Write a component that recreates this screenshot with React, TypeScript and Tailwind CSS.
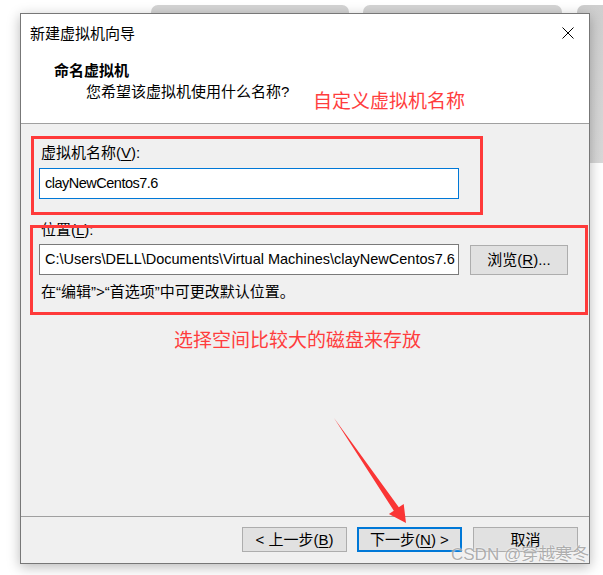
import React from "react";

const ui = { fontFamily: '"Liberation Sans", "Noto Sans CJK SC", sans-serif' };
const cjk = { fontFamily: '"Noto Sans CJK SC", "Liberation Sans", sans-serif' };

function Key({ k }: { k: string }) {
  return <span className="underline underline-offset-2">{k}</span>;
}

function Btn({
  children,
  primary,
  className = "",
}: {
  children: React.ReactNode;
  primary?: boolean;
  className?: string;
}) {
  return (
    <div
      className={
        "flex h-[25px] w-[105px] items-center justify-center bg-[#e1e1e1] text-[15px] leading-[20px] text-black " +
        (primary ? "border-2 border-[#0078d7] " : "border border-[#adadad] ") +
        className
      }
    >
      {children}
    </div>
  );
}

function CloseIcon() {
  return (
    <svg width="12" height="12" viewBox="0 0 12 12" className="block">
      <path d="M0.5 0.5 L11.5 11.5 M11.5 0.5 L0.5 11.5" stroke="#000" strokeWidth="1" />
    </svg>
  );
}

export default function App() {
  return (
    <div className="relative h-[575px] w-[603px] overflow-hidden bg-white" style={ui}>
      {/* browser tabs peeking out behind the dialog */}
      <div className="absolute left-[151px] top-[5px] h-[40px] w-[198px] rounded-t-[7px] bg-[#d4d4d4]" />
      <div className="absolute left-[363px] top-[5px] h-[40px] w-[199px] rounded-t-[7px] bg-[#d4d4d4]" />
      <div className="absolute left-[577px] top-[5px] h-[158px] w-[40px] rounded-tl-[7px] bg-[linear-gradient(#cfcfcf,#d8d8d8)]" />

      {/* wizard window */}
      <div className="relative ml-[20px] mt-[13px] flex h-[551px] w-[570px] flex-col border border-[#777] bg-[#f0f0f0] shadow-[0_3px_12px_rgba(0,0,0,0.28)]">
        {/* title + page header */}
        <div className="flex h-[109px] flex-col bg-white">
          <div className="flex h-[38px] items-center justify-between pl-[9px] pr-[15px]">
            <span className="text-[15px] leading-[20px] text-black" style={cjk}>新建虚拟机向导</span>
            <CloseIcon />
          </div>
          <div className="mt-[8px] pl-[33px] text-[15px] font-bold leading-[20px] text-black" style={cjk}>命名虚拟机</div>
          <div className="mt-[2px] pl-[65px] text-[15px] leading-[20px] text-black">您希望该虚拟机使用什么名称?</div>
        </div>
        <div className="h-px bg-[#a0a0a0]" />

        {/* form */}
        <div className="flex flex-1 flex-col pl-[18px] pt-[19px]">
          <div className="ml-[2px] text-[15px] leading-[20px] text-black">
            虚拟机名称(<Key k="V" />):
          </div>
          <div className="mt-[5px] flex h-[31px] w-[420px] items-center border border-[#0078d7] bg-white pl-[5px] text-[14.5px] tracking-[-0.5px] text-black">
            clayNewCentos7.6
          </div>
          <div className="ml-[2px] mt-[21px] text-[15px] leading-[20px] text-black">
            位置(<Key k="L" />):
          </div>
          <div className="mt-[4px] flex items-start gap-[11px]">
            <div className="flex h-[31px] w-[420px] items-center overflow-hidden whitespace-nowrap border border-[#7a7a7a] bg-white pl-[5px] text-[14.5px] text-black">
              C:\Users\DELL\Documents\Virtual Machines\clayNewCentos7.6
            </div>
            <div className="mt-px flex h-[30px] w-[98px] items-center justify-center border border-[#adadad] bg-[#e1e1e1] text-[15px] text-black">
              浏览(<Key k="R" />)...
            </div>
          </div>
          <div className="ml-[2px] mt-[7px] text-[15px] leading-[20px] text-black">
            在“编辑”&gt;“首选项”中可更改默认位置。
          </div>
        </div>

        {/* button bar */}
        <div className="h-px bg-[#a0a0a0]" />
        <div className="flex h-[46px] items-start justify-end gap-[10px] pr-[11px] pt-[10px]">
          <Btn>
            &lt; 上一步(<Key k="B" />)
          </Btn>
          <Btn primary>
            下一步(<Key k="N" />) &gt;
          </Btn>
          <Btn className="ml-px">取消</Btn>
        </div>
      </div>

      {/* red annotations */}
      <div className="pointer-events-none absolute left-[31px] top-[136px] h-[79px] w-[452px] border-[3px] border-[#ff3a3a]" />
      <div className="pointer-events-none absolute left-[30px] top-[225px] h-[90px] w-[558px] border-[3px] border-[#ff3a3a]" />
      <div className="pointer-events-none absolute left-[313px] top-[88px] text-[19px] leading-[24px] text-[#ff3d3d]" style={cjk}>
        自定义虚拟机名称
      </div>
      <div className="pointer-events-none absolute left-[174px] top-[327px] text-[19px] leading-[24px] text-[#ff3d3d]" style={cjk}>
        选择空间比较大的磁盘来存放
      </div>
      <svg className="pointer-events-none absolute left-0 top-0" width="603" height="575" viewBox="0 0 603 575">
        <polygon
          points="334,418 398.8,507.3 403.7,503.9 406,523 388.9,514.1 393.8,510.7"
          fill="#fa3535"
        />
      </svg>

      {/* site watermark */}
      <div className="pointer-events-none absolute left-[451px] top-[544px] whitespace-nowrap text-[17px] leading-[22px] text-[rgba(150,150,150,0.75)] [text-shadow:0_0_2px_#fff]">
        CSDN @穿越寒冬
      </div>
    </div>
  );
}
